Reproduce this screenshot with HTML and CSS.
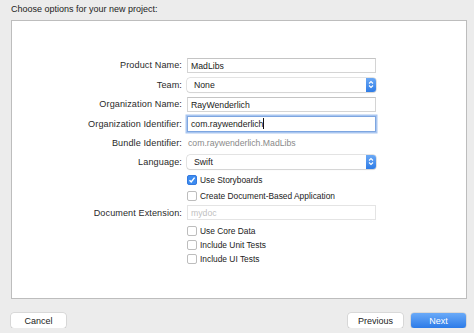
FILE: index.html
```html
<!DOCTYPE html>
<html lang="en">
<head>
    <meta charset="UTF-8">
    <title>Choose options for your new project</title>
    <link rel="stylesheet" href="styles.css">
</head>
<body>
    <div class="sheet">
        <div class="title">Choose options for your new project:</div>

        <!-- Options panel -->
        <div class="panel">
            <div class="form">
                <label class="label">Product Name:</label>
                <div class="field"><span class="input">MadLibs</span></div>

                <label class="label">Team:</label>
                <div class="field">
                    <div class="popup">
                        <span>None</span>
                        <span class="stepper">
                            <svg width="6" height="9" viewBox="0 0 6 9"><path d="M1 3.5 L3 1.5 L5 3.5 M1 5.5 L3 7.5 L5 5.5" fill="none" stroke="#fff" stroke-width="1.1"/></svg>
                        </span>
                    </div>
                </div>

                <label class="label">Organization Name:</label>
                <div class="field"><span class="input">RayWenderlich</span></div>

                <label class="label">Organization Identifier:</label>
                <div class="field"><span class="input focused">com.raywenderlich<i class="caret"></i></span></div>

                <label class="label">Bundle Identifier:</label>
                <div class="field"><span class="static">com.raywenderlich.MadLibs</span></div>

                <label class="label">Language:</label>
                <div class="field">
                    <div class="popup">
                        <span>Swift</span>
                        <span class="stepper">
                            <svg width="6" height="9" viewBox="0 0 6 9"><path d="M1 3.5 L3 1.5 L5 3.5 M1 5.5 L3 7.5 L5 5.5" fill="none" stroke="#fff" stroke-width="1.1"/></svg>
                        </span>
                    </div>
                </div>

                <span></span>
                <div class="field check-row">
                    <span class="box checked">
                        <svg width="8" height="8" viewBox="0 0 8 8"><path d="M1.5 4.2 L3.2 6 L6.6 1.6" fill="none" stroke="#fff" stroke-width="1.4"/></svg>
                    </span>
                    Use Storyboards
                </div>

                <span></span>
                <div class="field check-row"><span class="box"></span>Create Document-Based Application</div>

                <label class="label">Document Extension:</label>
                <div class="field"><span class="input disabled">mydoc</span></div>

                <span></span>
                <div class="field check-row"><span class="box"></span>Use Core Data</div>

                <span></span>
                <div class="field check-row"><span class="box"></span>Include Unit Tests</div>

                <span></span>
                <div class="field check-row"><span class="box"></span>Include UI Tests</div>
            </div>
        </div>

        <!-- Bottom buttons -->
        <div class="buttons">
            <button class="btn">Cancel</button>
            <div class="right-buttons">
                <button class="btn">Previous</button>
                <button class="btn primary">Next</button>
            </div>
        </div>
    </div>
</body>
</html>
```

FILE: styles.css
```css
body {
    margin: 0;
    background: #ececec;
    font-family: "Liberation Sans", Arial, sans-serif;
    font-size: 9px;
    color: #262626;
}

.sheet {
    padding: 0 7px 0 11px;
}

.title {
    height: 20px;
    line-height: 18px;
    font-size: 9px;
    color: #222;
}

/* Panel blanco */
.panel {
    height: 277px;
    background: #fff;
    border: 1px solid #bdbdbd;
    box-sizing: content-box;
}

.form {
    display: grid;
    grid-template-columns: 170px 189px;
    grid-template-rows: 20px 19px 20px 20px 18px 19px 18px 13px 21px 15px 14px 13px;
    column-gap: 5px;
    padding-top: 34px;
    align-items: center;
}

.label {
    text-align: right;
    color: #2a2a2a;
    font-size: 9.1px;
    letter-spacing: 0.1px;
}

.field {
    display: flex;
    align-items: center;
}

.input {
    display: block;
    width: 100%;
    height: 15px;
    line-height: 14px;
    box-sizing: border-box;
    padding: 0 3px;
    border: 1px solid #d4d4d4;
    border-top-color: #c4c4c4;
    font-size: 8.7px;
    color: #1a1a1a;
}

.input.focused {
    height: 16px;
    border: 1px solid #7ea6e0;
    box-shadow: 0 0 0 1.5px #a9c6f0;
}

.caret {
    display: inline-block;
    width: 1px;
    height: 11px;
    background: #111;
    vertical-align: -2px;
}

.input.disabled {
    color: #bfbfbf;
    border-color: #e4e4e4;
}

.static {
    padding-left: 1px;
    color: #8a8a8a;
    font-size: 8.7px;
}

.popup {
    width: 100%;
    height: 14px;
    box-sizing: border-box;
    display: flex;
    align-items: center;
    justify-content: space-between;
    padding-left: 7px;
    background: #fff;
    border-radius: 3px;
    box-shadow: 0 0 0 0.5px #c8c8c8, 0 1px 1px rgba(0, 0, 0, 0.12);
    font-size: 8.7px;
    color: #1a1a1a;
}

.stepper {
    width: 10px;
    height: 14px;
    border-radius: 0 3px 3px 0;
    background: linear-gradient(#6aa8f5, #2f7ce6);
    display: flex;
    align-items: center;
    justify-content: center;
}

.check-row {
    gap: 3px;
    color: #222;
    font-size: 8.4px;
}

.box {
    width: 8px;
    height: 8px;
    border: 1px solid #bdbdbd;
    border-radius: 2px;
    background: #fff;
    display: flex;
    align-items: center;
    justify-content: center;
    flex-shrink: 0;
}

.box.checked {
    background: #3d8cf0;
    border-color: #3479de;
}

/* Botones */
.buttons {
    display: flex;
    justify-content: space-between;
    margin-top: 14px;
    padding-right: 1px;
}

.right-buttons {
    display: flex;
    gap: 8px;
}

.btn {
    width: 55px;
    height: 15px;
    padding: 0;
    border: none;
    border-radius: 3px;
    background: #fff;
    box-shadow: 0 0 0 0.5px #c6c6c6, 0 1px 1px rgba(0, 0, 0, 0.15);
    font-family: "Liberation Sans", Arial, sans-serif;
    font-size: 9px;
    color: #222;
}

.btn.primary {
    background: linear-gradient(#6aaaf8, #2c7be8);
    color: #fff;
}
```
